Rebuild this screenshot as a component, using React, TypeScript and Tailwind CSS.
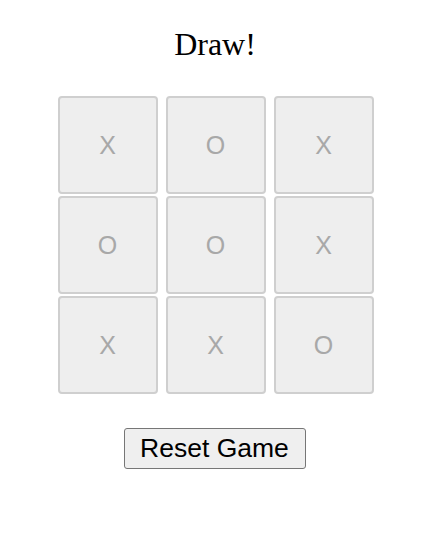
const board = ['X', 'O', 'X', 'O', 'O', 'X', 'X', 'X', 'O']

export default function App() {
  return (
    <div className="flex min-h-[534px] flex-col items-center bg-white pt-[22px] font-['Liberation_Sans',Arial,sans-serif]">
      <h1 className="font-['Liberation_Serif',serif] text-[32px] leading-[44px] text-black">Draw!</h1>
      <div className="mt-[30px] ml-[2px] grid grid-cols-[100px_100px_100px] gap-x-[8px] gap-y-[2px]">
        {board.map((v, i) => (
          <button
            key={i}
            disabled
            className="flex h-[98px] w-[100px] items-center justify-center rounded-[4px] border-2 border-[#cfcfcf] bg-[#eeeeee] pt-[2px] pr-[1px] text-[25px] text-[#a8a8a8]"
          >
            {v}
          </button>
        ))}
      </div>
      <button className="mt-[34px] mr-[1px] h-[41px] w-[182px] rounded-[3px] border border-[#767676] bg-[#efefef] text-[26.5px] leading-none text-black">
        Reset Game
      </button>
    </div>
  )
}
